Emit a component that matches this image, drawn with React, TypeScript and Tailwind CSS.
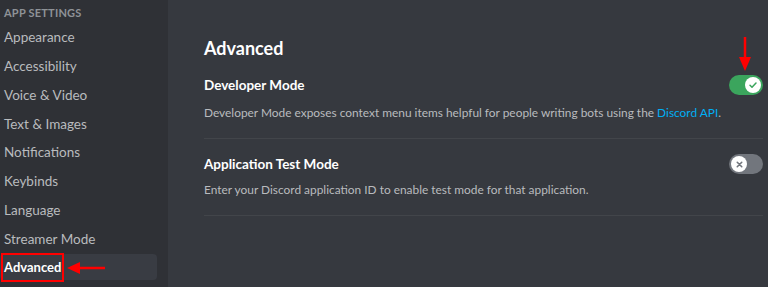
import React from 'react';

const items = [
  'Appearance',
  'Accessibility',
  'Voice & Video',
  'Text & Images',
  'Notifications',
  'Keybinds',
  'Language',
  'Streamer Mode',
];

const Toggle = ({ on }: { on: boolean }) => (
  <div
    className={`flex items-center w-[34px] h-[20px] rounded-full px-[2px] ${
      on ? 'bg-[#3ba55d] justify-end' : 'bg-[#72767d] justify-start'
    }`}
  >
    <div className="w-[16px] h-[16px] rounded-full bg-white flex items-center justify-center">
      {on ? (
        <svg width="10" height="10" viewBox="0 0 20 20">
          <path d="M4 10.5l4 4 8-8.5" fill="none" stroke="#3ba55d" strokeWidth="3" strokeLinecap="round" strokeLinejoin="round" />
        </svg>
      ) : (
        <svg width="9" height="9" viewBox="0 0 20 20">
          <path d="M5 5l10 10M15 5L5 15" fill="none" stroke="#72767d" strokeWidth="3.5" strokeLinecap="round" />
        </svg>
      )}
    </div>
  </div>
);

const Arrow = ({ dir }: { dir: 'left' | 'down' }) =>
  dir === 'left' ? (
    <svg width="38" height="12" viewBox="0 0 38 12">
      <path d="M12 6h26" stroke="#ff0000" strokeWidth="2.5" />
      <path d="M0 6l13-6v12z" fill="#ff0000" />
    </svg>
  ) : (
    <svg width="12" height="34" viewBox="0 0 12 34">
      <path d="M6 0v22" stroke="#ff0000" strokeWidth="2.5" />
      <path d="M6 34L0 20h12z" fill="#ff0000" />
    </svg>
  );

export default function App() {
  return (
    <div
      className="flex w-[768px] h-[287px] overflow-hidden bg-[#36393f]"
      style={{ fontFamily: 'Lato, "Noto Sans", sans-serif' }}
    >
      <aside className="w-[168px] shrink-0 bg-[#2f3136] pr-[11px] pt-[4px]">
        <div className="pl-[4px] h-[18px] text-[11px] font-bold text-[#8e9297] tracking-[0.02em] leading-[18px]">
          APP SETTINGS
        </div>
        <div className="flex flex-col mt-[1px]">
          {items.map((t) => (
            <div key={t} className="h-[28.8px] pl-[4px] flex items-center text-[13.5px] text-[#b9bbbe]">
              {t}
            </div>
          ))}
          <div className="relative mt-[1px] h-[26px] rounded-[4px] bg-[#393c43] pl-[4px] flex items-center text-[13px] font-bold text-white">
            Advanced
            <div className="absolute left-[1px] top-[-1px] w-[63px] h-[29px] border-2 border-[#ff0000]" />
            <div className="absolute left-[67px] top-[8px]">
              <Arrow dir="left" />
            </div>
          </div>
        </div>
      </aside>
      <main className="flex-1 pl-[36px] pr-[5px] pt-[37px]">
        <h1 className="text-[18px] font-bold text-white leading-[22px]">Advanced</h1>
        <div className="mt-[16px] border-b border-[#42454a] pb-[17px]">
          <div className="flex items-center justify-between relative">
            <span className="text-[13.5px] font-bold text-white leading-[20px]">Developer Mode</span>
            <div className="relative">
              <div className="absolute left-[10px] top-[-38px]">
                <Arrow dir="down" />
              </div>
              <Toggle on />
            </div>
          </div>
          <p className="mt-[10px] text-[11.9px] text-[#b9bbbe] leading-[16px]">
            Developer Mode exposes context menu items helpful for people writing bots using the{' '}
            <span className="text-[#00aff4]">Discord API</span>.
          </p>
        </div>
        <div className="mt-[15px] border-b border-[#42454a] pb-[17px]">
          <div className="flex items-center justify-between">
            <span className="text-[13.5px] font-bold text-white leading-[20px]">Application Test Mode</span>
            <Toggle on={false} />
          </div>
          <p className="mt-[8px] text-[11.9px] text-[#b9bbbe] leading-[16px]">
            Enter your Discord application ID to enable test mode for that application.
          </p>
        </div>
      </main>
    </div>
  );
}
